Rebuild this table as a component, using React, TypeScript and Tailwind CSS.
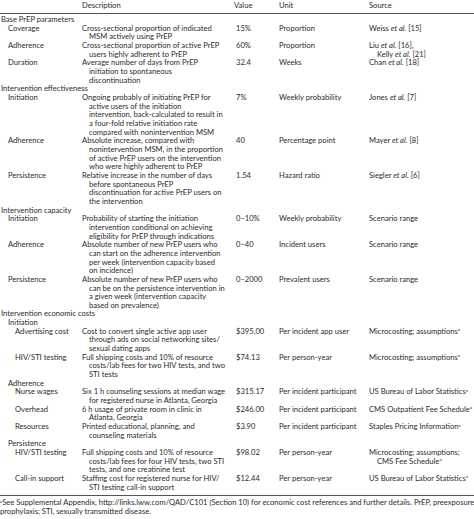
import React from "react";

type Row = {
  label: string;
  level: 0 | 1 | 2;
  desc?: string[];
  value?: string;
  unit?: string;
  source?: React.ReactNode[];
};

const Sup = () => (
  <span className="relative -top-[2.5px] inline-block text-[4.5px] leading-none">a</span>
);

const Ref = ({ name, n }: { name: string; n: string }) => (
  <>
    {name} <i>et al.</i> [{n}]
  </>
);

// Cost model inputs, one entry per printed line group
const rows: Row[] = [
  { label: "Base PrEP parameters", level: 0 },
  {
    label: "Coverage",
    level: 1,
    desc: ["Cross-sectional proportion of indicated", "MSM actively using PrEP"],
    value: "15%",
    unit: "Proportion",
    source: [<Ref name="Weiss" n="15" />],
  },
  {
    label: "Adherence",
    level: 1,
    desc: ["Cross-sectional proportion of active PrEP", "users highly adherent to PrEP"],
    value: "60%",
    unit: "Proportion",
    source: [
      <>
        <Ref name="Liu" n="16" />,
      </>,
      <Ref name="Kelly" n="21" />,
    ],
  },
  {
    label: "Duration",
    level: 1,
    desc: ["Average number of days from PrEP", "initiation to spontaneous", "discontinuation"],
    value: "32.4",
    unit: "Weeks",
    source: [<Ref name="Chan" n="18" />],
  },
  { label: "Intervention effectiveness", level: 0 },
  {
    label: "Initiation",
    level: 1,
    desc: [
      "Ongoing probably of initiating PrEP for",
      "active users of the initiation",
      "intervention, back-calculated to result in",
      "a four-fold relative initiation rate",
      "compared with nonintervention MSM",
    ],
    value: "7%",
    unit: "Weekly probability",
    source: [<Ref name="Jones" n="7" />],
  },
  {
    label: "Adherence",
    level: 1,
    desc: [
      "Absolute increase, compared with",
      "nonintervention MSM, in the proportion",
      "of active PrEP users on the intervention",
      "who were highly adherent to PrEP",
    ],
    value: "40",
    unit: "Percentage point",
    source: [<Ref name="Mayer" n="8" />],
  },
  {
    label: "Persistence",
    level: 1,
    desc: [
      "Relative increase in the number of days",
      "before spontaneous PrEP",
      "discontinuation for active PrEP users on",
      "the intervention",
    ],
    value: "1.54",
    unit: "Hazard ratio",
    source: [<Ref name="Siegler" n="6" />],
  },
  { label: "Intervention capacity", level: 0 },
  {
    label: "Initiation",
    level: 1,
    desc: [
      "Probability of starting the initiation",
      "intervention conditional on achieving",
      "eligibility for PrEP through indications",
    ],
    value: "0–10%",
    unit: "Weekly probability",
    source: ["Scenario range"],
  },
  {
    label: "Adherence",
    level: 1,
    desc: [
      "Absolute number of new PrEP users who",
      "can start on the adherence intervention",
      "per week (intervention capacity based",
      "on incidence)",
    ],
    value: "0–40",
    unit: "Incident users",
    source: ["Scenario range"],
  },
  {
    label: "Persistence",
    level: 1,
    desc: [
      "Absolute number of new PrEP users who",
      "can be on the persistence intervention in",
      "a given week (intervention capacity",
      "based on prevalence)",
    ],
    value: "0–2000",
    unit: "Prevalent users",
    source: ["Scenario range"],
  },
  { label: "Intervention economic costs", level: 0 },
  { label: "Initiation", level: 1 },
  {
    label: "Advertising cost",
    level: 2,
    desc: [
      "Cost to convert single active app user",
      "through ads on social networking sites/",
      "sexual dating apps",
    ],
    value: "$395.00",
    unit: "Per incident app user",
    source: [
      <>
        Microcosting; assumptions
        <Sup />
      </>,
    ],
  },
  {
    label: "HIV/STI testing",
    level: 2,
    desc: [
      "Full shipping costs and 10% of resource",
      "costs/lab fees for two HIV tests, and two",
      "STI tests",
    ],
    value: "$74.13",
    unit: "Per person-year",
    source: [
      <>
        Microcosting; assumptions
        <Sup />
      </>,
    ],
  },
  { label: "Adherence", level: 1 },
  {
    label: "Nurse wages",
    level: 2,
    desc: ["Six 1 h counseling sessions at median wage", "for registered nurse in Atlanta, Georgia"],
    value: "$315.17",
    unit: "Per incident participant",
    source: [
      <>
        US Bureau of Labor Statistics
        <Sup />
      </>,
    ],
  },
  {
    label: "Overhead",
    level: 2,
    desc: ["6 h usage of private room in clinic in", "Atlanta, Georgia"],
    value: "$246.00",
    unit: "Per incident participant",
    source: [
      <>
        CMS Outpatient Fee Schedule
        <Sup />
      </>,
    ],
  },
  {
    label: "Resources",
    level: 2,
    desc: ["Printed educational, planning, and", "counseling materials"],
    value: "$3.90",
    unit: "Per incident participant",
    source: [
      <>
        Staples Pricing Information
        <Sup />
      </>,
    ],
  },
  { label: "Persistence", level: 1 },
  {
    label: "HIV/STI testing",
    level: 2,
    desc: [
      "Full shipping costs and 10% of resource",
      "costs/lab fees for four HIV tests, two STI",
      "tests, and one creatinine test",
    ],
    value: "$98.02",
    unit: "Per person-year",
    source: [
      "Microcosting; assumptions;",
      <>
        CMS Fee Schedule
        <Sup />
      </>,
    ],
  },
  {
    label: "Call-in support",
    level: 2,
    desc: ["Staffing cost for registered nurse for HIV/", "STI testing call-in support"],
    value: "$12.44",
    unit: "Per person-year",
    source: [
      <>
        US Bureau of Labor Statistics
        <Sup />
      </>,
    ],
  },
];

const cols = "grid grid-cols-[82px_154px_43px_90px_1fr]";

const indent = { 0: "pl-[1px]", 1: "pl-[8px]", 2: "pl-[15px]" } as const;

function TableRow({ row }: { row: Row }) {
  if (!row.desc) {
    return <div className={`whitespace-nowrap ${indent[row.level]}`}>{row.label}</div>;
  }
  return (
    <div className={cols}>
      <div className={`whitespace-nowrap ${indent[row.level]}`}>{row.label}</div>
      <div className="whitespace-nowrap">
        {row.desc.map((line, i) => (
          <div key={i} className={i > 0 ? "pl-[7px]" : ""}>
            {line}
          </div>
        ))}
      </div>
      <div className="whitespace-nowrap">{row.value}</div>
      <div className="whitespace-nowrap">{row.unit}</div>
      <div className="whitespace-nowrap">
        {row.source?.map((s, i) => (
          <div key={i} className={i > 0 ? "pl-[8px]" : ""}>
            {s}
          </div>
        ))}
      </div>
    </div>
  );
}

export default function App() {
  return (
    <div className="h-[519px] w-[474px] overflow-hidden bg-white font-['Lato',sans-serif] text-[7.6px] leading-[8.65px] text-[#2b2b2b]">
      {/* Header */}
      <div className={`${cols} border-b-[1.5px] border-[#555] pt-[1px] pb-[3px]`}>
        <div />
        <div>Description</div>
        <div className="-ml-[2px]">Value</div>
        <div>Unit</div>
        <div>Source</div>
      </div>

      {/* Body */}
      <div className="flex flex-col border-b-[1.5px] border-[#555] pt-[1.5px] pb-[3.5px]">
        {rows.map((row, i) => (
          <TableRow key={i} row={row} />
        ))}
      </div>

      {/* Footnote */}
      <div className="whitespace-nowrap pt-[2.5px] leading-[8.4px]">
        <div>
          <Sup />
          See Supplemental Appendix, http://links.lww.com/QAD/C101 (Section 10) for economic cost references and further details. PrEP, preexposure
        </div>
        <div>prophylaxis; STI, sexually transmitted disease.</div>
      </div>
    </div>
  );
}
